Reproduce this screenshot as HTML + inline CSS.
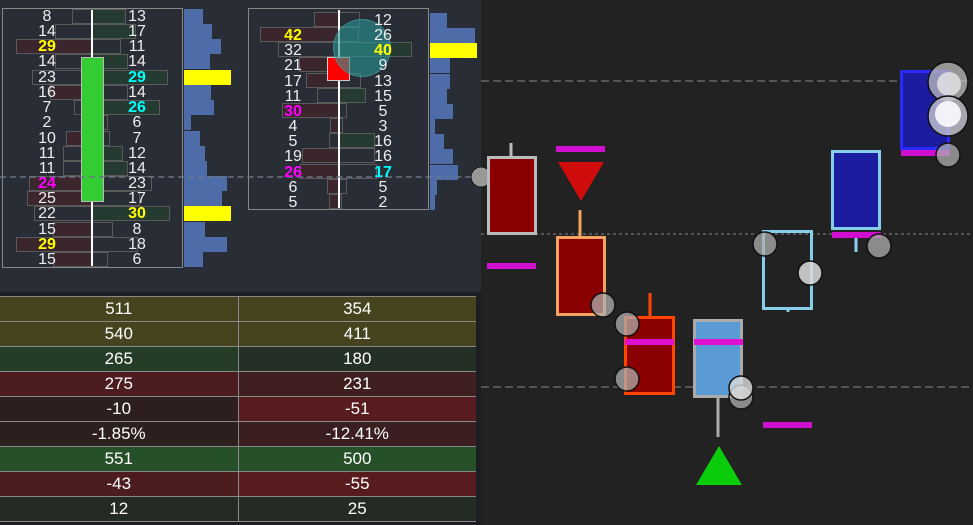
<!DOCTYPE html>
<html><head><meta charset="utf-8"><style>
*{margin:0;padding:0;box-sizing:border-box}
body{width:973px;height:525px;overflow:hidden;background:#222;font-family:"Liberation Sans",sans-serif;position:relative}
.a{position:absolute}
.n{position:absolute;width:40px;text-align:center;font-size:16px;color:#eee;line-height:15px}
.b{position:absolute;height:15px;border:1px solid #5a5a5a}
.r{background:#3a262c}.g{background:#253a30}
.v{position:absolute;height:15px;background:#4e6ca8;left:184px}
table{position:absolute;left:0;top:296px;width:476px;border-collapse:collapse}
td{height:25px;border:1px solid #888;color:#fff;font-size:17px;text-align:center;width:50%;border-left:none}
td:last-child{border-right:none}
</style></head><body>
<div class="a" style="left:0;top:0;width:481px;height:525px;background:#1c1e22"></div>
<div class="a" style="left:0;top:0;width:481px;height:292px;background:#292d36"></div>
<div class="a" style="left:2px;top:8px;width:181px;height:260px;border:1px solid #888"></div>
<div class="a" style="left:248px;top:8px;width:181px;height:202px;border:1px solid #888"></div>

<div class="b" style="left:72px;top:9px;width:20px"></div><div class="b g" style="left:92px;top:9px;width:34px"></div>
<div class="b" style="left:55px;top:24px;width:37px"></div><div class="b g" style="left:92px;top:24px;width:44px"></div>
<div class="b r" style="left:16px;top:39px;width:76px"></div><div class="b" style="left:92px;top:39px;width:29px"></div>
<div class="b" style="left:55px;top:54px;width:37px"></div><div class="b g" style="left:92px;top:54px;width:36px"></div>
<div class="b" style="left:32px;top:70px;width:60px"></div><div class="b g" style="left:92px;top:70px;width:76px"></div>
<div class="b r" style="left:50px;top:85px;width:42px"></div><div class="b" style="left:92px;top:85px;width:36px"></div>
<div class="b" style="left:74px;top:100px;width:18px"></div><div class="b g" style="left:92px;top:100px;width:68px"></div>
<div class="b" style="left:85px;top:115px;width:7px"></div><div class="b" style="left:92px;top:115px;width:16px"></div>
<div class="b r" style="left:66px;top:131px;width:26px"></div><div class="b" style="left:92px;top:131px;width:18px"></div>
<div class="b" style="left:63px;top:146px;width:29px"></div><div class="b g" style="left:92px;top:146px;width:31px"></div>
<div class="b" style="left:63px;top:161px;width:29px"></div><div class="b g" style="left:92px;top:161px;width:36px"></div>
<div class="b r" style="left:29px;top:176px;width:63px"></div><div class="b" style="left:92px;top:176px;width:60px"></div>
<div class="b r" style="left:27px;top:191px;width:65px"></div><div class="b" style="left:92px;top:191px;width:48px"></div>
<div class="b" style="left:34px;top:206px;width:58px"></div><div class="b g" style="left:92px;top:206px;width:78px"></div>
<div class="b r" style="left:53px;top:222px;width:39px"></div><div class="b" style="left:92px;top:222px;width:21px"></div>
<div class="b r" style="left:16px;top:237px;width:76px"></div><div class="b" style="left:92px;top:237px;width:46px"></div>
<div class="b r" style="left:53px;top:252px;width:39px"></div><div class="b" style="left:92px;top:252px;width:16px"></div>
<div class="a" style="left:91px;top:10px;width:2px;height:256px;background:#fff"></div>
<div class="a" style="left:81px;top:57px;width:23px;height:145px;background:#33cc33;border:1px solid #bbb"></div>

<div class="b r" style="left:314px;top:12px;width:25px"></div><div class="b" style="left:339px;top:12px;width:21px"></div>
<div class="b r" style="left:260px;top:27px;width:79px"></div><div class="b" style="left:339px;top:27px;width:20px"></div>
<div class="b" style="left:278px;top:42px;width:61px"></div><div class="b g" style="left:339px;top:42px;width:73px"></div>
<div class="b r" style="left:299px;top:57px;width:40px"></div><div class="b" style="left:339px;top:57px;width:8px"></div>
<div class="b r" style="left:306px;top:73px;width:33px"></div><div class="b" style="left:339px;top:73px;width:22px"></div>
<div class="b" style="left:317px;top:88px;width:22px"></div><div class="b g" style="left:339px;top:88px;width:27px"></div>
<div class="b r" style="left:282px;top:103px;width:57px"></div><div class="b" style="left:339px;top:103px;width:8px"></div>
<div class="b r" style="left:330px;top:118px;width:9px"></div><div class="b" style="left:339px;top:118px;width:4px"></div>
<div class="b" style="left:329px;top:133px;width:10px"></div><div class="b g" style="left:339px;top:133px;width:36px"></div>
<div class="b r" style="left:302px;top:148px;width:37px"></div><div class="b" style="left:339px;top:148px;width:36px"></div>
<div class="b r" style="left:300px;top:164px;width:39px"></div><div class="b" style="left:339px;top:164px;width:38px"></div>
<div class="b r" style="left:327px;top:179px;width:12px"></div><div class="b" style="left:339px;top:179px;width:8px"></div>
<div class="b r" style="left:329px;top:194px;width:10px"></div><div class="b" style="left:339px;top:194px;width:3px"></div>
<div class="a" style="left:338px;top:10px;width:2px;height:198px;background:#fff"></div>
<div class="a" style="left:327px;top:57px;width:23px;height:24px;background:#f00;border:1px solid #ccc"></div>

<div class="v" style="top:9px;width:19px"></div><div class="v" style="top:24px;width:28px"></div>
<div class="v" style="top:39px;width:37px"></div><div class="v" style="top:54px;width:26px"></div>
<div class="v" style="top:70px;width:47px;background:#ff0"></div><div class="v" style="top:85px;width:27px"></div>
<div class="v" style="top:100px;width:30px"></div><div class="v" style="top:115px;width:7px"></div>
<div class="v" style="top:131px;width:16px"></div><div class="v" style="top:146px;width:21px"></div>
<div class="v" style="top:161px;width:23px"></div><div class="v" style="top:176px;width:43px"></div>
<div class="v" style="top:191px;width:38px"></div><div class="v" style="top:206px;width:47px;background:#ff0"></div>
<div class="v" style="top:222px;width:21px"></div><div class="v" style="top:237px;width:43px"></div>
<div class="v" style="top:252px;width:19px"></div>
<div class="v" style="left:430px;top:13px;width:17px"></div><div class="v" style="left:430px;top:28px;width:45px"></div>
<div class="v" style="left:430px;top:43px;width:47px;background:#ff0"></div><div class="v" style="left:430px;top:58px;width:20px"></div>
<div class="v" style="left:430px;top:74px;width:20px"></div><div class="v" style="left:430px;top:89px;width:17px"></div>
<div class="v" style="left:430px;top:104px;width:23px"></div><div class="v" style="left:430px;top:119px;width:5px"></div>
<div class="v" style="left:430px;top:134px;width:14px"></div><div class="v" style="left:430px;top:149px;width:23px"></div>
<div class="v" style="left:430px;top:165px;width:28px"></div><div class="v" style="left:430px;top:180px;width:7px"></div>
<div class="v" style="left:430px;top:195px;width:5px"></div>
<div class="a" style="left:333px;top:19px;width:58px;height:58px;border-radius:50%;background:rgba(40,150,150,.6);border:1px solid rgba(80,170,170,.5)"></div>

<div class="a" style="left:0;top:176px;width:481px;border-top:2px dashed rgba(110,120,140,.7)"></div>

<div class="n" style="left:27px;top:9px">8</div><div class="n" style="left:117px;top:9px">13</div>
<div class="n" style="left:27px;top:24px">14</div><div class="n" style="left:117px;top:24px">17</div>
<div class="n" style="left:27px;top:39px;color:#ff0;font-weight:bold">29</div><div class="n" style="left:117px;top:39px">11</div>
<div class="n" style="left:27px;top:54px">14</div><div class="n" style="left:117px;top:54px">14</div>
<div class="n" style="left:27px;top:70px">23</div><div class="n" style="left:117px;top:70px;color:#0ff;font-weight:bold">29</div>
<div class="n" style="left:27px;top:85px">16</div><div class="n" style="left:117px;top:85px">14</div>
<div class="n" style="left:27px;top:100px">7</div><div class="n" style="left:117px;top:100px;color:#0ff;font-weight:bold">26</div>
<div class="n" style="left:27px;top:115px">2</div><div class="n" style="left:117px;top:115px">6</div>
<div class="n" style="left:27px;top:131px">10</div><div class="n" style="left:117px;top:131px">7</div>
<div class="n" style="left:27px;top:146px">11</div><div class="n" style="left:117px;top:146px">12</div>
<div class="n" style="left:27px;top:161px">11</div><div class="n" style="left:117px;top:161px">14</div>
<div class="n" style="left:27px;top:176px;color:#f0f;font-weight:bold">24</div><div class="n" style="left:117px;top:176px">23</div>
<div class="n" style="left:27px;top:191px">25</div><div class="n" style="left:117px;top:191px">17</div>
<div class="n" style="left:27px;top:206px">22</div><div class="n" style="left:117px;top:206px;color:#ff0;font-weight:bold">30</div>
<div class="n" style="left:27px;top:222px">15</div><div class="n" style="left:117px;top:222px">8</div>
<div class="n" style="left:27px;top:237px;color:#ff0;font-weight:bold">29</div><div class="n" style="left:117px;top:237px">18</div>
<div class="n" style="left:27px;top:252px">15</div><div class="n" style="left:117px;top:252px">6</div>

<div class="n" style="left:363px;top:13px">12</div>
<div class="n" style="left:273px;top:28px;color:#ff0;font-weight:bold">42</div><div class="n" style="left:363px;top:28px">26</div>
<div class="n" style="left:273px;top:43px">32</div><div class="n" style="left:363px;top:43px;color:#ff0;font-weight:bold">40</div>
<div class="n" style="left:273px;top:58px">21</div><div class="n" style="left:363px;top:58px">9</div>
<div class="n" style="left:273px;top:74px">17</div><div class="n" style="left:363px;top:74px">13</div>
<div class="n" style="left:273px;top:89px">11</div><div class="n" style="left:363px;top:89px">15</div>
<div class="n" style="left:273px;top:104px;color:#f0f;font-weight:bold">30</div><div class="n" style="left:363px;top:104px">5</div>
<div class="n" style="left:273px;top:119px">4</div><div class="n" style="left:363px;top:119px">3</div>
<div class="n" style="left:273px;top:134px">5</div><div class="n" style="left:363px;top:134px">16</div>
<div class="n" style="left:273px;top:149px">19</div><div class="n" style="left:363px;top:149px">16</div>
<div class="n" style="left:273px;top:165px;color:#f0f;font-weight:bold">26</div><div class="n" style="left:363px;top:165px;color:#0ff;font-weight:bold">17</div>
<div class="n" style="left:273px;top:180px">6</div><div class="n" style="left:363px;top:180px">5</div>
<div class="n" style="left:273px;top:195px">5</div><div class="n" style="left:363px;top:195px">2</div>

<table>
<tr><td style="background:#45441f">511</td><td style="background:#45441f">354</td></tr>
<tr><td style="background:#45441f">540</td><td style="background:#45441f">411</td></tr>
<tr><td style="background:#253d27">265</td><td style="background:#243026">180</td></tr>
<tr><td style="background:#4d1c1e">275</td><td style="background:#3f1f20">231</td></tr>
<tr><td style="background:#2e1f1f">-10</td><td style="background:#581c1e">-51</td></tr>
<tr><td style="background:#2e1f1f">-1.85%</td><td style="background:#3b1f20">-12.41%</td></tr>
<tr><td style="background:#265027">551</td><td style="background:#265027">500</td></tr>
<tr><td style="background:#4d1c1e">-43</td><td style="background:#581c1e">-55</td></tr>
<tr><td style="background:#232b24">12</td><td style="background:#232b24">25</td></tr>
</table>

<svg class="a" style="left:0;top:0" width="973" height="525">
<g stroke="#555" stroke-width="2" stroke-dasharray="8,4">
<line x1="481" y1="81" x2="973" y2="81"/><line x1="481" y1="234" x2="973" y2="234" stroke-dasharray="3,3"/><line x1="481" y1="387" x2="973" y2="387"/>
</g>
<circle cx="481" cy="177" r="10" fill="#999" stroke="#111"/>
<line x1="511" y1="143" x2="511" y2="156" stroke="#bbb" stroke-width="3"/>
<rect x="488.5" y="157.5" width="47" height="76" fill="#8b0000" stroke="#bbb" stroke-width="3"/>
<rect x="487" y="263" width="49" height="6" fill="#d010d0"/>
<rect x="556" y="146" width="49" height="6" fill="#d010d0"/>
<polygon points="558,162 604,162 581,201" fill="#d00c0c"/>
<line x1="580" y1="210" x2="580" y2="236" stroke="#f4a460" stroke-width="3"/>
<rect x="557.5" y="237.5" width="47" height="77" fill="#8b0000" stroke="#f4a460" stroke-width="3"/>
<line x1="650" y1="293" x2="650" y2="317" stroke="#ff4500" stroke-width="3"/>
<rect x="625.5" y="317.5" width="48" height="76" fill="#8b0000" stroke="#ff4500" stroke-width="3"/>
<rect x="625" y="339" width="49" height="6" fill="#e010d0"/>
<line x1="718" y1="397" x2="718" y2="437" stroke="#aaa" stroke-width="3"/>
<rect x="694.5" y="320.5" width="47" height="76" fill="#5b9bd5" stroke="#aaa" stroke-width="3"/>
<rect x="694" y="339" width="49" height="6" fill="#e010d0"/>
<polygon points="696,485 742,485 719,446" fill="#0acc0a"/>
<rect x="763" y="422" width="49" height="6" fill="#d010d0"/>
<rect x="763.5" y="231.5" width="48" height="77" fill="none" stroke="#87ceeb" stroke-width="3"/>
<line x1="788" y1="309" x2="788" y2="312" stroke="#87ceeb" stroke-width="3"/>
<rect x="832.5" y="151.5" width="47" height="77" fill="#1c1ca0" stroke="#87ceeb" stroke-width="3"/>
<rect x="832" y="232" width="49" height="6" fill="#d010d0"/>
<line x1="856" y1="238" x2="856" y2="252" stroke="#87ceeb" stroke-width="3"/>
<rect x="901.5" y="71.5" width="47" height="77" fill="#1c1ca0" stroke="#2a2aff" stroke-width="3"/>
<rect x="901" y="150" width="49" height="6" fill="#d010d0"/>
<g fill="rgba(175,175,175,.75)" stroke="#111" stroke-width="1.5">
<circle cx="603" cy="305" r="12"/><circle cx="627" cy="324" r="12"/><circle cx="627" cy="379" r="12"/>
<circle cx="741" cy="397" r="12"/><circle cx="741" cy="388" r="12" fill="rgba(220,220,220,.8)"/>
<circle cx="765" cy="244" r="12"/><circle cx="810" cy="273" r="12" fill="rgba(220,220,220,.85)"/>
<circle cx="879" cy="246" r="12"/><circle cx="948" cy="155" r="12"/>
<circle cx="948" cy="82" r="20" fill="rgba(190,190,190,.75)"/><circle cx="949" cy="84" r="12" fill="rgba(230,230,230,.8)" stroke="none"/>
<circle cx="948" cy="116" r="20" fill="rgba(200,200,210,.8)"/><circle cx="948" cy="114" r="13" fill="#f2f2f8" stroke="none"/>
</g>
</svg>
</body></html>
